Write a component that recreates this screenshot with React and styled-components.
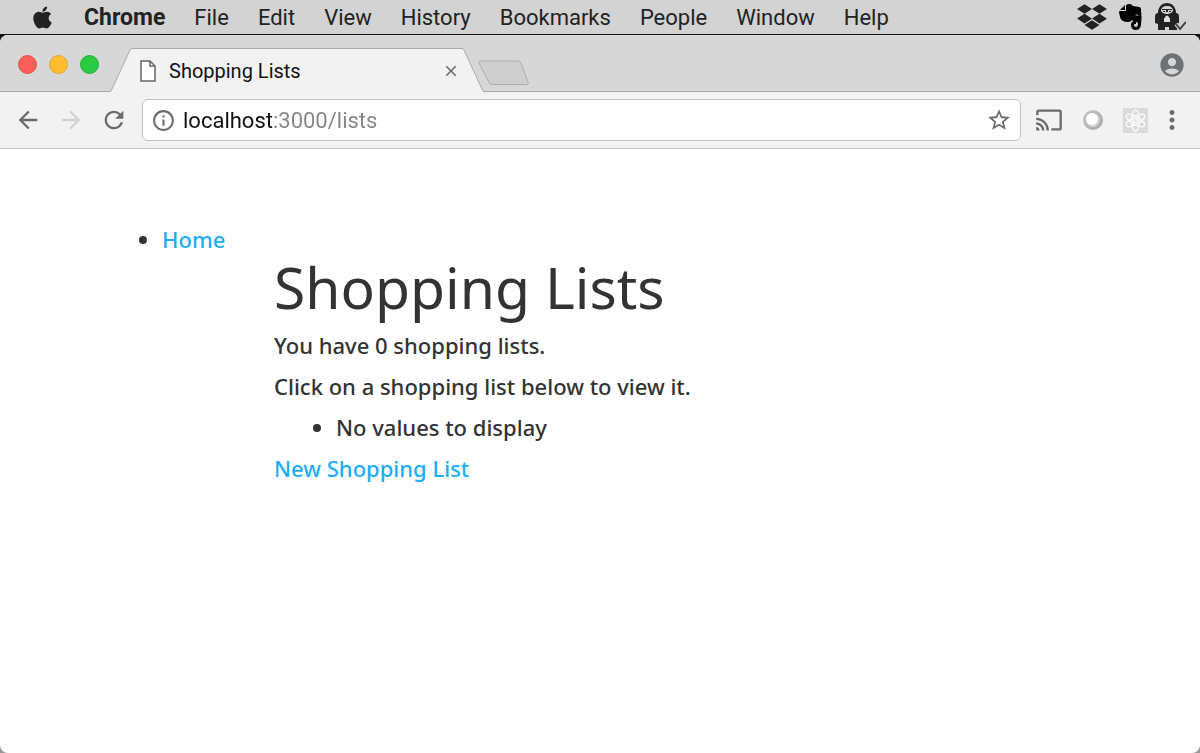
import { useState } from "react"
import styled, { createGlobalStyle } from "styled-components"
import { FaApple, FaDropbox } from "react-icons/fa"
import {
	MdAccountCircle,
	MdArrowBack,
	MdArrowForward,
	MdCast,
	MdClose,
	MdInfoOutline,
	MdMoreVert,
	MdRefresh,
	MdStarBorder
} from "react-icons/md"

const GlobalStyle = createGlobalStyle`
	body {
		margin: 0;
		font-family: Roboto, "Liberation Sans", sans-serif;
	}
	button {
		display: flex;
		align-items: center;
		justify-content: center;
		flex-shrink: 0;
		padding: 0;
		border: none;
		background: none;
		font: inherit;
		color: inherit;
	}
	svg {
		display: block;
		flex-shrink: 0;
	}
`

const Desktop = styled.div`
	display: flex;
	flex-direction: column;
	min-height: 100vh;
	background: linear-gradient(#111, #999);
`

const MenuBar = styled.nav`
	display: flex;
	align-items: center;
	height: 34px;
	padding: 0 14px 0 30px;
	background: #d3d3d3;
	border-bottom: 1px solid #111;
	color: #222;
	font-size: 22px;
`

const Menus = styled.div`
	display: flex;
	align-items: baseline;
	gap: 29px;
	margin-left: 29px;
`

const MenuItem = styled.button`
	font-size: ${(props) => (props.$active ? 23 : 22)}px;
	font-weight: ${(props) => (props.$active ? 700 : 400)};
`

const StatusIcons = styled.div`
	display: flex;
	align-items: center;
	gap: 12px;
	margin-left: auto;
`

const Window = styled.div`
	display: flex;
	flex-direction: column;
	flex: 1;
	border-radius: 8px;
	overflow: hidden;
	background: #fff;
`

const TabStrip = styled.div`
	display: flex;
	align-items: flex-end;
	height: 57px;
	padding: 0 14px 0 18px;
	box-sizing: border-box;
	background: #d7d7d7;
	box-shadow: inset 0 -1px #a9a9a9, inset 0 1px #e2e2e2;
`

const Lights = styled.div`
	display: flex;
	gap: 12px;
	padding: 0 11px 18px 0;
`

const Light = styled.button`
	width: 19px;
	height: 19px;
	border: 1px solid ${(props) => props.$edge};
	border-radius: 50%;
	background: ${(props) => props.$color};
`

const Tab = styled.div`
	display: flex;
	height: 44px;
`

const TabBody = styled.div`
	display: flex;
	align-items: center;
	width: 330px;
	padding: 0 2px 0 8px;
	box-sizing: border-box;
	background: #f2f2f2;
	border-top: 1px solid #a9a9a9;
	font-size: 20px;
	color: #111;
`

const TabTitle = styled.span`
	flex: 1;
	margin-left: 13px;
`

const NewTab = styled.button`
	margin: 0 auto 6px -6px;
`

const Profile = styled.button`
	margin-bottom: 13px;
	color: #6e7277;
`

const Toolbar = styled.div`
	display: flex;
	align-items: center;
	height: 57px;
	padding: 0 22px 0 14px;
	box-sizing: border-box;
	background: #f2f2f2;
	border-bottom: 1px solid #c4c4c4;
	color: #6b6b6b;
`

const Navigation = styled.div`
	display: flex;
	gap: 15px;
`

const ToolButton = styled.button`
	color: ${(props) => (props.$dim ? "#d2d2d2" : "#6b6b6b")};
`

const MoreButton = styled(ToolButton)`
	width: 12px;
`

const AddressBar = styled.div`
	display: flex;
	align-items: center;
	flex: 1;
	height: 42px;
	margin: 0 14px;
	padding: 0 8px;
	box-sizing: border-box;
	background: #fff;
	border: 1px solid #c2c2c2;
	border-radius: 6px;
`

// host part is dark, the rest of the url is grey
const Address = styled.input`
	flex: 1;
	min-width: 0;
	margin: 0 8px 0 7px;
	padding: 2px 0 0;
	border: none;
	outline: none;
	font: 22px Roboto, "Liberation Sans", sans-serif;
	line-height: 30px;
	color: #111;
	background: linear-gradient(to right, #111 90px, #858585 90px);
	-webkit-background-clip: text;
	background-clip: text;
	-webkit-text-fill-color: transparent;
`

const Extensions = styled.div`
	display: flex;
	align-items: center;
	gap: 18px;
`

const ReactBadge = styled.button`
	width: 25px;
	height: 25px;
	background: #dadada;
`

const Page = styled.div`
	flex: 1;
	padding: 70px 100px;
	font: 500 22px "Noto Sans", "Open Sans", sans-serif;
	line-height: 41px;
	color: #333;
`

const List = styled.ul`
	margin: 0;
	padding-left: 62px;
`

const Content = styled.main`
	margin-left: 174px;
`

const Title = styled.h1`
	margin: 0 0 11px;
	font-size: 57px;
	font-weight: 400;
	line-height: 54px;
`

const Text = styled.p`
	margin: 0;
`

const Link = styled.a`
	color: #1eaef7;
	text-decoration: none;
`

const menus = [
	"Chrome",
	"File",
	"Edit",
	"View",
	"History",
	"Bookmarks",
	"People",
	"Window",
	"Help"
]

const ElephantIcon = () => (
	<svg width="24" height="27" viewBox="0 0 24 27">
		<path d="M1 6L6 1v5z" fill="#000" />
		<path
			d="M7 7V2Q7 0 10 0q3 0 4 2l6 1q2 0 2 3 1 8 0 15-1 5-5 5-5 0-5-5 0-4 4-4h1v3h-1q-1 0-1 1 0 2 2 2t2-4q-1-1-2-1-3 0-4-2-1 2-4 2Q2 18 1 13L0 8q0-1 1-1z"
			fill="#000"
		/>
		<path d="M16 11q2-2 4 1z" fill="#bbb" />
	</svg>
)

const RobotIcon = () => (
	<svg width="31" height="28" viewBox="0 0 31 28">
		<path
			d="M3 10C3 4 7 0 12 0s9 4 9 10q3 0 3 4v6l-2 1v6h-8v-3h-4v3H3v-6l-3-1v-6q0-4 3-4z"
			fill="#222"
		/>
		<path d="M6 8c0-3 2-5 6-5s6 2 6 5c-2 4-10 4-12 0z" fill="#d3d3d3" />
		<path d="M7 6h4v1H7zM13 6h4v1h-4zM8 8h2v1H8zM14 8h2v1h-2zM11 6h2v3h-2z" fill="#222" />
		<path d="M10 15v-1q2-3 4 0v1h1v4H9v-4z" fill="#ddd" />
		<path d="M21 21l4 5 6-7" fill="none" stroke="#d3d3d3" strokeWidth="4" />
		<path d="M21 21l4 5 6-7" fill="none" stroke="#444" strokeWidth="2" />
	</svg>
)

const FileIcon = () => (
	<svg width="16" height="22" viewBox="0 0 16 22" fill="#fff" stroke="#666" strokeWidth="1.5">
		<path d="M1 1h9l5 5v15H1z" />
		<path d="M10 1v5h5" fill="none" />
	</svg>
)

const BallIcon = () => (
	<svg width="24" height="24" viewBox="0 0 24 24">
		<defs>
			<linearGradient id="rim" x1="0" y1="0" x2="1" y2="1">
				<stop offset="0" stopColor="#c8c8c8" />
				<stop offset="1" stopColor="#a5a5a5" />
			</linearGradient>
		</defs>
		<circle cx="12" cy="12" r="10" fill="url(#rim)" />
		<circle cx="12" cy="12" r="7" fill="#d0d0d0" />
		<circle cx="11" cy="11" r="6" fill="#fff" />
	</svg>
)

const AtomIcon = () => (
	<svg width="25" height="25" viewBox="-12.500 -12.500 25 25" fill="none" stroke="#fafafa" strokeWidth="1.4">
		<ellipse rx="4" ry="10.500" />
		<ellipse rx="4" ry="10.500" transform="rotate(60)" />
		<ellipse rx="4" ry="10.500" transform="rotate(120)" />
		<circle r="2" />
	</svg>
)

const App = () => {
	const [url, setUrl] = useState("localhost:3000/lists")

	return (
		<Desktop>
			<GlobalStyle />
			<MenuBar>
				<FaApple size={25} />
				<Menus>
					{menus.map((menu) => (
						<MenuItem key={menu} $active={menu === "Chrome"}>
							{menu}
						</MenuItem>
					))}
				</Menus>
				<StatusIcons>
					<FaDropbox size={30} />
					<ElephantIcon />
					<RobotIcon />
				</StatusIcons>
			</MenuBar>
			<Window>
				<TabStrip>
					<Lights>
						<Light aria-label="Close window" $color="#fc5f57" $edge="#e4504a" />
						<Light aria-label="Minimize" $color="#fdbd2e" $edge="#e0a32a" />
						<Light aria-label="Zoom" $color="#28cb41" $edge="#22b138" />
					</Lights>
					<Tab>
						<svg width="22" height="44" viewBox="0 0 22 44">
							<path d="M0 44L1 43 20 2Q21 .5 22 .5V44z" fill="#f2f2f2" />
							<path d="M0 43.5Q1 43.5 2 41L20 2Q21 .5 22 .5" fill="none" stroke="#a9a9a9" />
						</svg>
						<TabBody>
							<FileIcon />
							<TabTitle>Shopping Lists</TabTitle>
							<ToolButton aria-label="Close tab">
								<MdClose size={18} />
							</ToolButton>
						</TabBody>
						<svg width="22" height="44" viewBox="0 0 22 44">
							<path d="M22 44L21 43 2 2Q1 .5 0 .5V44z" fill="#f2f2f2" />
							<path d="M22 43.5Q21 43.5 20 41L2 2Q1 .5 0 .5" fill="none" stroke="#a9a9a9" />
						</svg>
					</Tab>
					<NewTab aria-label="New tab">
						<svg width="52" height="26" viewBox="0 0 52 26">
							<path
								d="M3 1H40Q42 1 43 3L50 22Q51 24.500 49 24.500H14Q12 24.500 11 22.500L1 3Q0 1 3 1z"
								fill="#cfcfcf"
								stroke="#adadad"
							/>
						</svg>
					</NewTab>
					<Profile aria-label="Profile">
						<MdAccountCircle size={28} />
					</Profile>
				</TabStrip>
				<Toolbar>
					<Navigation>
						<ToolButton aria-label="Back">
							<MdArrowBack size={28} />
						</ToolButton>
						<ToolButton aria-label="Forward" $dim>
							<MdArrowForward size={28} />
						</ToolButton>
						<ToolButton aria-label="Reload">
							<MdRefresh size={28} />
						</ToolButton>
					</Navigation>
					<AddressBar>
						<MdInfoOutline size={25} />
						<Address
							type="text"
							aria-label="Address"
							value={url}
							onChange={(e) => setUrl(e.target.value)}
						/>
						<ToolButton aria-label="Bookmark this page">
							<MdStarBorder size={26} />
						</ToolButton>
					</AddressBar>
					<Extensions>
						<ToolButton aria-label="Cast">
							<MdCast size={28} />
						</ToolButton>
						<ToolButton aria-label="Extension">
							<BallIcon />
						</ToolButton>
						<ReactBadge aria-label="React tools">
							<AtomIcon />
						</ReactBadge>
						<MoreButton aria-label="More">
							<MdMoreVert size={30} />
						</MoreButton>
					</Extensions>
				</Toolbar>
				<Page>
					<List>
						<li>
							<Link href="/">Home</Link>
						</li>
					</List>
					<Content>
						<Title>Shopping Lists</Title>
						<Text>You have 0 shopping lists.</Text>
						<Text>Click on a shopping list below to view it.</Text>
						<List>
							<li>No values to display</li>
						</List>
						<Link href="/lists/new">New Shopping List</Link>
					</Content>
				</Page>
			</Window>
		</Desktop>
	)
}

export default App
